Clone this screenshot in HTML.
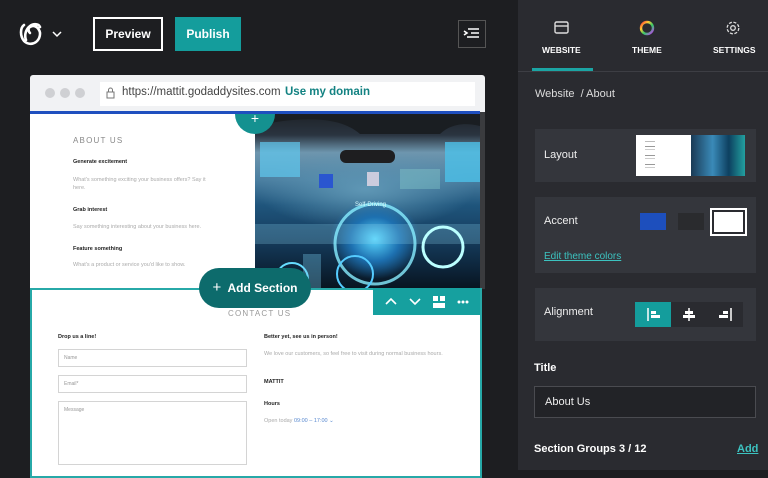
<!DOCTYPE html>
<html><head><meta charset="utf-8"><style>
*{margin:0;padding:0;box-sizing:border-box}
body{width:768px;height:470px;overflow:hidden;background:#1d1e21;font-family:"Liberation Sans",sans-serif;position:relative}
.a{position:absolute}
.t{color:#fff;font-weight:bold}
.card{position:absolute;left:535px;width:221px;background:#34363c}
.small{font-size:6px;color:#999}
.lbl{font-size:6.5px;color:#222;font-weight:bold}
.inp{position:absolute;border:1px solid #d4d4d4;background:#fff;font-size:5px;color:#999;padding:5px 5px}
</style></head><body>
<svg class="a" style="left:18px;top:21px" width="46" height="26" viewBox="0 0 46 26">
<path d="M6 4c-4 3-4 11 0 16 3 3 8 4 12 1 4-3 5-9 3-12-2-4-6-5-9-3-2 1-2 4 0 6M8 19c-2-5 0-11 4-14 4-3 9-2 10 1" fill="none" stroke="#fff" stroke-width="2.6" stroke-linecap="round"/>
<path d="M35 11l4 4 4-4" fill="none" stroke="#fff" stroke-width="1.5"/>
</svg>
<div class="a t" style="left:93px;top:17px;width:70px;height:34px;border:2px solid #fff;font-size:12px;line-height:30px;text-align:center">Preview</div>
<div class="a t" style="left:175px;top:17px;width:66px;height:34px;background:#149d9c;font-size:12px;line-height:34px;text-align:center">Publish</div>
<div class="a" style="left:458px;top:20px;width:28px;height:28px;border:1px solid #555"></div>
<svg class="a" style="left:463px;top:26px" width="18" height="16"><path d="M5 3h11M8 7h8M4 11h12M1 5l3 2-3 2" stroke="#fff" stroke-width="1.6" fill="none"/></svg>
<div class="a" style="left:30px;top:75px;width:455px;height:37px;background:#f1f2f4;border-radius:3px 3px 0 0"></div>
<div class="a" style="left:45px;top:88px;width:10px;height:10px;border-radius:50%;background:#cfd0d3"></div>
<div class="a" style="left:60px;top:88px;width:10px;height:10px;border-radius:50%;background:#cfd0d3"></div>
<div class="a" style="left:75px;top:88px;width:10px;height:10px;border-radius:50%;background:#cfd0d3"></div>
<div class="a" style="left:100px;top:82px;width:375px;height:24px;background:#fff"></div>
<svg class="a" style="left:106px;top:87px" width="9" height="12"><rect x="1" y="5" width="7" height="6" fill="none" stroke="#777" stroke-width="1"/><path d="M2.5 5V3a2 2 0 0 1 4 0v2" fill="none" stroke="#777"/></svg>
<div class="a" style="left:122px;top:86px;font-size:11.5px;color:#444">https://mattit.godaddysites.com</div>
<div class="a" style="left:285px;top:86px;font-size:11.5px;color:#138282;font-weight:bold">Use my domain</div>
<div class="a" style="left:30px;top:111px;width:450px;height:3px;background:#1f4fbf"></div>
<div class="a" style="left:30px;top:114px;width:225px;height:175px;background:#fff"></div>
<div class="a" style="left:73px;top:136px;font-size:8px;letter-spacing:1.2px;color:#888">ABOUT US</div>
<div class="a lbl" style="left:73px;top:159px;font-size:5.5px">Generate excitement</div>
<div class="a small" style="left:73px;top:176px;font-size:5.5px;width:145px;line-height:8px;color:#aaa">What's something exciting your business offers? Say it here.</div>
<div class="a lbl" style="left:73px;top:207px;font-size:5.5px">Grab interest</div>
<div class="a small" style="left:73px;top:224px;font-size:5.5px;color:#aaa">Say something interesting about your business here.</div>
<div class="a lbl" style="left:73px;top:246px;font-size:5.5px">Feature something</div>
<div class="a small" style="left:73px;top:262px;font-size:5.5px;color:#aaa">What's a product or service you'd like to show.</div>
<div class="a" style="left:255px;top:114px;width:225px;height:175px;overflow:hidden;background:
radial-gradient(ellipse 45px 40px at 120px 125px,#5ad8ff 0%,#1d70b0 55%,transparent 100%),
radial-gradient(ellipse 110px 40px at 110px 75px,#5f97b5 0%,transparent 100%),
linear-gradient(180deg,#1e2328 0%,#2a3440 12%,#6e96ae 22%,#4a7ea0 38%,#1f557c 52%,#163e60 70%,#0c2236 90%,#08141f 100%);"></div>
<svg class="a" style="left:255px;top:114px" width="225" height="175">
<path d="M0 0h225v12c-15-4-30-2-40 8h-80c-20-18-60-18-105-8z" fill="#1a1e22"/>
<rect x="85" y="36" width="55" height="13" rx="6" fill="#1e1e20"/>
<rect x="5" y="28" width="40" height="35" fill="#5fc8ee" opacity=".7"/>
<rect x="190" y="28" width="35" height="40" fill="#4cc0e8" opacity=".8"/>
<rect x="64" y="60" width="14" height="14" fill="#2a56d0"/>
<rect x="112" y="58" width="12" height="14" fill="#ccd"/>
<rect x="145" y="55" width="40" height="20" fill="#8cc" opacity=".4"/>
<rect x="0" y="110" width="225" height="20" fill="#8fd8f0" opacity=".25"/>
<circle cx="120" cy="130" r="40" fill="none" stroke="#8ef" stroke-width="3" opacity=".8"/>
<circle cx="188" cy="133" r="20" fill="none" stroke="#bff" stroke-width="3"/>
<circle cx="37" cy="165" r="16" fill="none" stroke="#6df" stroke-width="2"/>
<circle cx="30" cy="195" r="22" fill="none" stroke="#5cf" stroke-width="2"/>
<circle cx="100" cy="160" r="18" fill="none" stroke="#5cf" stroke-width="2"/>
<rect x="48" y="140" width="18" height="55" fill="#7ce" opacity=".35"/>
<text x="100" y="92" font-size="6" fill="#dff" font-family="Liberation Sans">Self-Driving</text>
</svg>
<div class="a" style="left:480px;top:112px;width:5px;height:177px;background:#3a3b3e"></div>
<div class="a" style="left:30px;top:114px;width:450px;height:30px;overflow:hidden">
<div class="a" style="left:205px;top:-20px;width:40px;height:40px;border-radius:50%;background:#149190;color:#fff;font-size:14px;text-align:center;line-height:48px">+</div></div>
<div class="a" style="left:30px;top:288px;width:452px;height:190px;background:#fff;border:2px solid #27a9a8"></div>
<div class="a" style="left:373px;top:288px;width:107px;height:27px;background:#16a09f"></div>
<svg class="a" style="left:373px;top:288px" width="107" height="27">
<path d="M13 16l5-5 5 5M37 11l5 5 5-5" stroke="#fff" stroke-width="1.6" fill="none"/>
<rect x="60" y="8" width="5" height="5" fill="#fff"/><rect x="67" y="8" width="5" height="5" fill="#fff"/><rect x="60" y="15" width="12" height="5" fill="#fff"/>
<circle cx="86" cy="14" r="1.5" fill="#fff"/><circle cx="90" cy="14" r="1.5" fill="#fff"/><circle cx="94" cy="14" r="1.5" fill="#fff"/>
</svg>
<div class="a t" style="left:199px;top:268px;width:112px;height:40px;border-radius:20px;background:#0d6b6c;font-size:12px;line-height:40px;text-align:center"><span style="font-weight:normal;font-size:15px">+</span>&nbsp; Add Section</div>
<div class="a" style="left:228px;top:309px;font-size:8px;letter-spacing:1.2px;color:#999">CONTACT US</div>
<div class="a lbl" style="left:58px;top:334px;font-size:5.5px">Drop us a line!</div>
<div class="inp" style="left:58px;top:349px;width:189px;height:18px">Name</div>
<div class="inp" style="left:58px;top:375px;width:189px;height:18px">Email*</div>
<div class="inp" style="left:58px;top:401px;width:189px;height:64px">Message</div>
<div class="a lbl" style="left:264px;top:334px;font-size:5.5px">Better yet, see us in person!</div>
<div class="a" style="left:264px;top:350px;font-size:5.5px;color:#aaa;width:180px;line-height:8px">We love our customers, so feel free to visit during normal business hours.</div>
<div class="a lbl" style="left:264px;top:379px;font-size:5.5px">MATTIT</div>
<div class="a lbl" style="left:264px;top:401px;font-size:5.5px">Hours</div>
<div class="a" style="left:264px;top:418px;font-size:5.5px;color:#aaa">Open today <span style="color:#5a8ad0">09:00 – 17:00 ⌄</span></div>
<div class="a" style="left:518px;top:0;width:250px;height:470px;background:#2a2b30"></div>
<div class="a" style="left:518px;top:71px;width:250px;height:1px;background:#3d3e44"></div>
<div class="a" style="left:532px;top:68px;width:61px;height:3px;background:#1ba5a4"></div>
<svg class="a" style="left:554px;top:20px" width="16" height="16"><rect x="1" y="2" width="13" height="11" rx="1.5" fill="none" stroke="#ddd" stroke-width="1.4"/><path d="M1 6h13" stroke="#ddd" stroke-width="1.4"/></svg>
<svg class="a" style="left:639px;top:20px" width="16" height="16"><defs><linearGradient id="g" x1="0" x2="1" y1="0" y2="1"><stop offset="0" stop-color="#f33"/><stop offset=".3" stop-color="#fc3"/><stop offset=".6" stop-color="#3c6"/><stop offset="1" stop-color="#c3f"/></linearGradient></defs><circle cx="8" cy="8" r="6" fill="none" stroke="url(#g)" stroke-width="2.4"/></svg>
<svg class="a" style="left:725px;top:20px" width="16" height="16"><circle cx="8" cy="8" r="2.3" fill="none" stroke="#ddd" stroke-width="1.3"/><circle cx="8" cy="8" r="5.8" fill="none" stroke="#ddd" stroke-width="1.3" stroke-dasharray="3 1.6"/></svg>
<div class="a t" style="left:542px;top:45px;font-size:8.5px">WEBSITE</div>
<div class="a t" style="left:632px;top:45px;font-size:8.5px">THEME</div>
<div class="a t" style="left:713px;top:45px;font-size:8.5px">SETTINGS</div>
<div class="a" style="left:535px;top:88px;font-size:11px;color:#ddd">Website &nbsp;/ About</div>
<div class="card" style="top:129px;height:53px"></div>
<div class="a" style="left:544px;top:149px;font-size:11px;color:#eee">Layout</div>
<div class="a" style="left:636px;top:135px;width:55px;height:41px;background:#fff"></div>
<div class="a" style="left:645px;top:141px;width:10px;height:1px;background:#bbb;box-shadow:0 5px 0 #999,0 8px 0 #ccc,0 14px 0 #999,0 17px 0 #ccc,0 23px 0 #999,0 26px 0 #ccc"></div>
<div class="a" style="left:691px;top:135px;width:54px;height:41px;background:linear-gradient(90deg,#1a3a55,#3a8ab8 40%,#0d4060 70%,#22a0a0)"></div>
<div class="card" style="top:197px;height:76px"></div>
<div class="a" style="left:544px;top:215px;font-size:11px;color:#eee">Accent</div>
<div class="a" style="left:640px;top:213px;width:26px;height:17px;background:#1d4fbd"></div>
<div class="a" style="left:678px;top:213px;width:26px;height:17px;background:#2a2b2e"></div>
<div class="a" style="left:712px;top:210px;width:33px;height:24px;background:#fff;border:2px solid #2a2b30;outline:2px solid #fff"></div>
<div class="a" style="left:544px;top:251px;font-size:10px;color:#3cc3c0;text-decoration:underline">Edit theme colors</div>
<div class="card" style="top:288px;height:53px"></div>
<div class="a" style="left:544px;top:306px;font-size:11px;color:#eee">Alignment</div>
<div class="a" style="left:635px;top:302px;width:36px;height:25px;background:#149d9c"></div>
<div class="a" style="left:671px;top:302px;width:72px;height:25px;background:#2a2b30"></div>
<svg class="a" style="left:635px;top:302px" width="108" height="25"><path d="M13 6v13" stroke="#fff" stroke-width="1.5"/><rect x="16" y="9" width="5" height="3" fill="#fff"/><rect x="16" y="13" width="9" height="3" fill="#fff"/>
<path d="M54 6v13" stroke="#fff" stroke-width="1.5"/><rect x="50" y="9" width="8" height="3" fill="#fff"/><rect x="48" y="13" width="12" height="3" fill="#fff"/>
<path d="M96 6v13" stroke="#fff" stroke-width="1.5"/><rect x="88" y="9" width="5" height="3" fill="#fff"/><rect x="84" y="13" width="9" height="3" fill="#fff"/></svg>
<div class="a t" style="left:534px;top:362px;font-size:11px">Title</div>
<div class="a" style="left:534px;top:386px;width:222px;height:32px;border:1px solid #4a4b50;background:#222327;color:#eee;font-size:11px;padding:9px 10px">About Us</div>
<div class="a t" style="left:534px;top:443px;font-size:11px">Section Groups 3 / 12</div>
<div class="a" style="left:737px;top:443px;font-size:11px;color:#3cc3c0;font-weight:bold;text-decoration:underline">Add</div>
</body></html>
